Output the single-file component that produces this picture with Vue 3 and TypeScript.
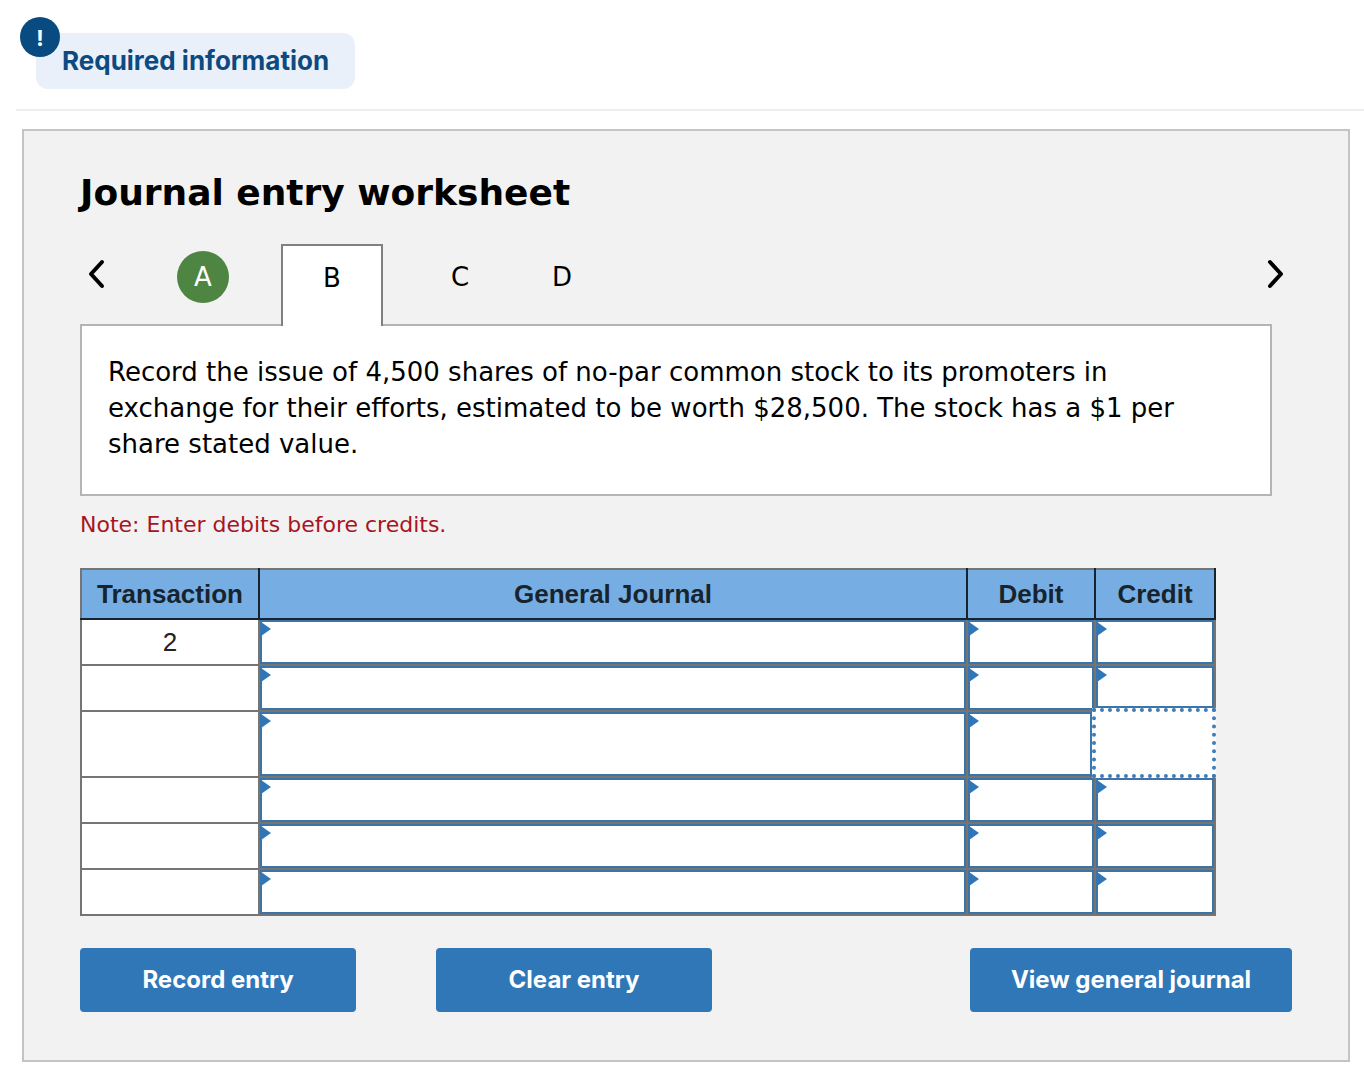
<script setup lang="ts">
import { reactive, ref } from 'vue'

type Column = 'journal' | 'debit' | 'credit'

interface Row {
  transaction: string
  tall?: boolean
  journal: string
  debit: string
  credit: string
}

const steps = ['A', 'B', 'C', 'D']
const completed = ['A']
const current = ref('B')

const columns: { key: Column; label: string }[] = [
  { key: 'journal', label: 'General Journal' },
  { key: 'debit', label: 'Debit' },
  { key: 'credit', label: 'Credit' },
]

const blankRow = (transaction = '', tall = false): Row => ({
  transaction,
  tall,
  journal: '',
  debit: '',
  credit: '',
})

const rows = reactive<Row[]>([
  blankRow('2'),
  blankRow(),
  blankRow('', true),
  blankRow(),
  blankRow(),
  blankRow(),
])

const selected = reactive({ row: 2, col: 2 })

function select(row: number, col: number) {
  selected.row = row
  selected.col = col
}

function cellClass(row: number, col: number) {
  return {
    selected: row === selected.row && col === selected.col,
    'left-of-selected': row === selected.row && col === selected.col - 1,
    'above-selected': row === selected.row - 1 && col === selected.col,
  }
}

function move(delta: number) {
  const next = steps[steps.indexOf(current.value) + delta]
  if (next) current.value = next
}

function clearEntry() {
  for (const row of rows) {
    row.journal = row.debit = row.credit = ''
  }
}
</script>

<template>
  <main class="page">
    <header class="required">
      <div class="required-label">
        <span class="required-icon" aria-hidden="true">!</span>
        Required information
      </div>
    </header>

    <section class="panel">
      <h1>Journal entry worksheet</h1>

      <nav class="steps">
        <button class="arrow" type="button" aria-label="Previous" @click="move(-1)">
          <svg width="20" height="32" viewBox="0 0 20 32">
            <path d="M16 4 L5 16 L16 28" />
          </svg>
        </button>
        <div class="tabs" role="tablist">
          <button
            v-for="step in steps"
            :key="step"
            type="button"
            role="tab"
            class="tab"
            :class="{ active: step === current, done: completed.includes(step) }"
            :aria-selected="step === current"
            @click="current = step"
          >
            <span>{{ step }}</span>
          </button>
        </div>
        <button class="arrow" type="button" aria-label="Next" @click="move(1)">
          <svg width="20" height="32" viewBox="0 0 20 32">
            <path d="M4 4 L15 16 L4 28" />
          </svg>
        </button>
      </nav>

      <p class="prompt">
        Record the issue of 4,500 shares of no-par common stock to its promoters in exchange for
        their efforts, estimated to be worth $28,500. The stock has a $1 per share stated value.
      </p>

      <p class="note">Note: Enter debits before credits.</p>

      <table class="journal">
        <colgroup>
          <col class="col-transaction" />
          <col />
          <col class="col-debit" />
          <col class="col-credit" />
        </colgroup>
        <thead>
          <tr>
            <th scope="col">Transaction</th>
            <th v-for="c in columns" :key="c.key" scope="col">{{ c.label }}</th>
          </tr>
        </thead>
        <tbody>
          <tr v-for="(row, r) in rows" :key="r" :class="{ tall: row.tall }">
            <td class="transaction">{{ row.transaction }}</td>
            <td v-for="(c, i) in columns" :key="c.key">
              <div class="cell" :class="cellClass(r, i)">
                <input
                  v-model="row[c.key]"
                  type="text"
                  :aria-label="`${c.label}, line ${r + 1}`"
                  @focus="select(r, i)"
                />
              </div>
            </td>
          </tr>
        </tbody>
      </table>

      <div class="actions">
        <button type="button" class="action">Record entry</button>
        <button type="button" class="action" @click="clearEntry">Clear entry</button>
        <button type="button" class="action view">View general journal</button>
      </div>
    </section>
  </main>
</template>

<style>
body {
  margin: 0;
  background: #fff;
}
</style>

<style scoped>
* {
  box-sizing: border-box;
}

.page {
  padding-bottom: 18px;
  font-family: Verdana, 'DejaVu Sans', sans-serif;
  color: #000;
}

button {
  margin: 0;
  padding: 0;
  border: 0;
  background: none;
  color: inherit;
  font-family: inherit;
  cursor: pointer;
}

.required {
  display: flex;
  margin-left: 16px;
  padding: 33px 0 20px 20px;
  border-bottom: 2px solid #eeeeee;
}

.required-label {
  position: relative;
  padding: 0 26px;
  border-radius: 12px;
  background: #e9f0f9;
  color: #0d4a80;
  font: 700 26px/56px Inter, sans-serif;
}

.required-icon {
  position: absolute;
  top: -16px;
  left: -16px;
  width: 40px;
  height: 40px;
  border-radius: 50%;
  background: #094b80;
  color: #fff;
  font-size: 22px;
  line-height: 42px;
  text-align: center;
}

.panel {
  margin: 18px 14px 0 22px;
  padding: 40px 56px 48px;
  border: 2px solid #c4c4c4;
  background: #f2f2f2;
}

h1 {
  margin: 0;
  font-size: 36px;
  line-height: 44px;
  font-weight: 700;
}

.steps {
  display: flex;
  align-items: flex-start;
  margin-top: 29px;
}

.arrow {
  width: 72px;
  height: 60px;
  padding: 0 6px;
  text-align: left;
}

.arrow:last-child {
  width: 32px;
}

.arrow svg {
  display: block;
}

.arrow path {
  fill: none;
  stroke: #000;
  stroke-width: 4;
  stroke-linecap: round;
  stroke-linejoin: round;
}

.tabs {
  display: flex;
  flex: 1;
}

.tab {
  width: 102px;
  height: 82px;
  padding-bottom: 16px;
  font-size: 26px;
}

.tab span {
  display: block;
  width: 52px;
  margin: 0 auto;
  border-radius: 50%;
  line-height: 52px;
}

.tab.done span {
  background: #4e8542;
  color: #fff;
}

.tab.active {
  position: relative;
  margin: 0 26px 0 27px;
  border: 2px solid #808080;
  border-bottom: 0;
  background: #fff;
}

.prompt {
  margin: -2px 20px 0 0;
  padding: 28px 80px 32px 26px;
  border: 2px solid #b4b4b4;
  background: #fff;
  font-size: 26px;
  line-height: 36px;
}

.note {
  margin: 14px 0 28px;
  color: #a8141e;
  font-size: 22px;
  line-height: 30px;
}

.journal {
  width: calc(100% - 76px);
  border-collapse: collapse;
  table-layout: fixed;
  font-family: Arial, 'Liberation Sans', sans-serif;
  font-size: 26px;
  line-height: 30px;
  color: #222;
}

.col-transaction {
  width: 178px;
}

.col-debit {
  width: 128px;
}

.col-credit {
  width: 120px;
}

th,
td {
  height: 46px;
  padding: 0;
  border: 2px solid #757575;
  background: #fff;
  text-align: center;
}

th {
  height: 50px;
  border-color: #757575 #17242e #17242e;
  background: #76aee3;
  color: #17242e;
  font-weight: 700;
}

th:first-child {
  border-left-color: #757575;
}

.tall td {
  height: 66px;
}

.cell {
  position: relative;
  height: 44px;
}

.tall .cell {
  height: 64px;
}

.cell::before {
  content: '';
  position: absolute;
  top: 2px;
  left: 1px;
  border-style: solid;
  border-width: 7px 0 7px 10px;
  border-color: transparent transparent transparent #2f76b8;
}

.cell input {
  display: block;
  width: 100%;
  height: 100%;
  margin: 0;
  padding: 0 12px;
  border: 2px solid #3c74a8;
  border-radius: 0;
  outline: 0;
  background: #fff;
  font: inherit;
  color: inherit;
}

.left-of-selected input {
  width: calc(100% - 2px);
}

.above-selected input {
  height: calc(100% - 2px);
}

.selected {
  z-index: 1;
}

.selected::before {
  content: none;
}

.selected input {
  position: absolute;
  top: -4px;
  left: -4px;
  width: calc(100% + 6px);
  height: calc(100% + 6px);
  border: 4px dotted #3f7cb8;
}

.actions {
  display: flex;
  gap: 80px;
  margin-top: 32px;
}

.action {
  width: 276px;
  height: 64px;
  border-radius: 4px;
  background: #3077b8;
  color: #fff;
  font: 700 24px/30px Inter, sans-serif;
}

.view {
  width: 322px;
  margin-left: auto;
}
</style>
